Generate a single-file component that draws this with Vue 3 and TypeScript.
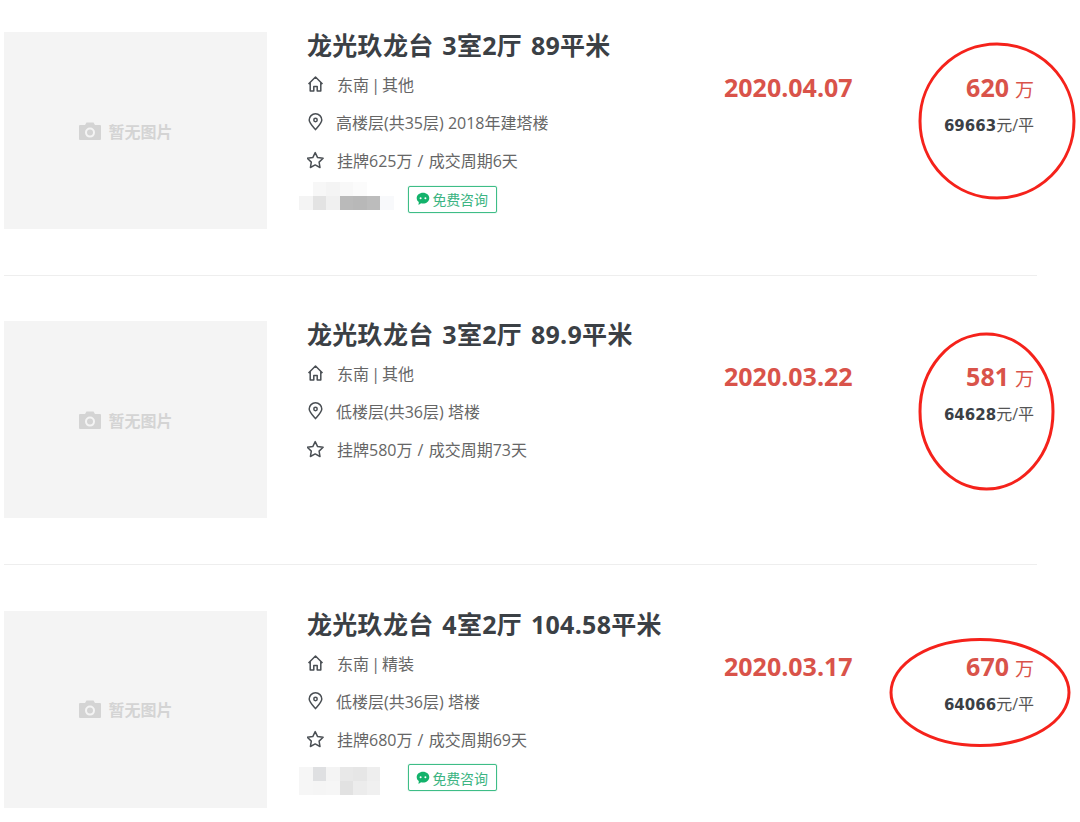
<template>
  <div class="page">
    <div v-for="item in deals" :key="item.date" class="deal">
      <div class="thumb">
        <svg class="thumb__cam" viewBox="0 0 22 18" aria-hidden="true">
          <path fill-rule="evenodd" d="M1 3h5l1.5-2.5h7L16 3h5a1 1 0 0 1 1 1v13a1 1 0 0 1-1 1H1a1 1 0 0 1-1-1V4a1 1 0 0 1 1-1zm10 2.6a5 5 0 1 0 0 10 5 5 0 0 0 0-10zm0 2a3 3 0 1 1 0 6 3 3 0 0 1 0-6z" />
        </svg>
        <span>暂无图片</span>
      </div>

      <div class="info">
        <h3 class="info__title">{{ item.title }}</h3>
        <div class="info__line">
          <svg class="info__icon" viewBox="0 0 18 18" aria-hidden="true">
            <path d="M1.500 9 8.500 2l7 7M3.200 7.600V16h3.600v-4.600h3.400V16h3.600V7.600" />
          </svg>
          <span class="info__text info__text--pipe">{{ item.facing }}</span>
        </div>
        <div class="info__line">
          <svg class="info__icon" viewBox="0 0 18 18" aria-hidden="true">
            <path d="M8.500 16.600C5.100 12.800 2.200 10 2.200 7.100a6.300 6.300 0 0 1 12.600 0c0 2.900-2.900 5.700-6.300 9.500z" />
            <circle cx="8.500" cy="7" r="1.700" />
          </svg>
          <span class="info__text info__text--tight">{{ item.floor }}</span>
        </div>
        <div class="info__line">
          <svg class="info__icon" viewBox="0 0 18 18" aria-hidden="true">
            <path d="m8.200 1.600 2.400 5 5.500.7-4 3.800.9 5.400-4.800-2.600-4.800 2.600.9-5.400-4-3.800 5.500-.7z" />
          </svg>
          <span class="info__text info__text--spaced">{{ item.listing }}</span>
        </div>
        <div v-if="item.mosaic" class="info__agent">
          <div class="mosaic" :style="{ marginTop: `${item.mosaicOffset}px` }">
            <i
              v-for="(shade, i) in item.mosaic"
              :key="i"
              :style="{ background: shade }"
            ></i>
          </div>
          <span class="consult">
            <svg class="consult__icon" viewBox="0 0 14 14" aria-hidden="true">
              <path d="M7 .8c3.500 0 6.300 2.400 6.300 5.400S10.500 11.600 7 11.600c-.7 0-1.300-.1-1.900-.3L2.500 13l.3-2.900C1.500 9.100.7 7.700.7 6.200.7 3.200 3.500.8 7 .8z" />
              <circle class="consult__dot" cx="4.600" cy="6.200" r="1" />
              <circle class="consult__dot" cx="9.400" cy="6.200" r="1" />
            </svg>
            免费咨询
          </span>
        </div>
      </div>

      <div class="date">{{ item.date }}</div>

      <div class="price">
        <div class="price__total"><b>{{ item.total }}</b><span>万</span></div>
        <div class="price__unit"><b>{{ item.unit }}</b>元/平</div>
      </div>
    </div>

    <svg class="marks" viewBox="0 0 1080 822" aria-hidden="true">
      <ellipse cx="997" cy="121" rx="77" ry="77" />
      <ellipse cx="986.500" cy="411.500" rx="66.500" ry="77.500" />
      <ellipse cx="980" cy="692.500" rx="89" ry="53" />
    </svg>
  </div>
</template>

<script setup lang="ts">
interface Deal {
  title: string;
  facing: string;
  floor: string;
  listing: string;
  date: string;
  total: number;
  unit: number;
  mosaic?: string[];
  mosaicOffset?: number;
}

const deals: Deal[] = [
  {
    title: '龙光玖龙台 3室2厅 89平米',
    facing: '东南 | 其他',
    floor: '高楼层(共35层) 2018年建塔楼',
    listing: '挂牌625万 / 成交周期6天',
    date: '2020.04.07',
    total: 620,
    unit: 69663,
    mosaic: [
      '#fff', '#f7f7f7', '#f4f4f4', '#f8f8f8', '#fbfbfb', '#fff', '#fff',
      '#f4f4f4', '#e3e3e3', '#f0f0f0', '#bababa', '#b8b8b8', '#bcbcbc', '#f8f9fb',
    ],
    mosaicOffset: -6,
  },
  {
    title: '龙光玖龙台 3室2厅 89.9平米',
    facing: '东南 | 其他',
    floor: '低楼层(共36层) 塔楼',
    listing: '挂牌580万 / 成交周期73天',
    date: '2020.03.22',
    total: 581,
    unit: 64628,
  },
  {
    title: '龙光玖龙台 4室2厅 104.58平米',
    facing: '东南 | 精装',
    floor: '低楼层(共36层) 塔楼',
    listing: '挂牌680万 / 成交周期69天',
    date: '2020.03.17',
    total: 670,
    unit: 64066,
    mosaic: [
      '#f6f6f6', '#dfe0e2', '#f4f4f4', '#e8e8e8', '#e6e6e6', '#eeeeee', '#fff',
      '#f6f6f6', '#f5f5f5', '#f6f6f6', '#e2e2e2', '#ececec', '#f0f0f0', '#fff',
    ],
    mosaicOffset: 6,
  },
];
</script>

<style scoped>
.page {
  position: relative;
  box-sizing: border-box;
  width: 1080px;
  height: 822px;
  overflow: hidden;
  padding: 32px 43px 0 4px;
  background: #fff;
  font-family: "Open Sans", "Noto Sans CJK SC", sans-serif;
  color: #666;
}

.deal {
  display: grid;
  grid-template-columns: 263px 457px 190px 1fr;
  height: 197px;
  padding-bottom: 46px;
  margin-bottom: 45.4px;
  border-bottom: 1px solid #eee;
}

.deal:last-of-type {
  border-bottom: 0;
}

.thumb {
  display: flex;
  align-items: center;
  justify-content: center;
  gap: 7px;
  height: 197px;
  padding-right: 19px;
  box-sizing: border-box;
  background: #f4f4f4;
  color: #d4d4d4;
  font-size: 16px;
  font-weight: 700;
}

.thumb__cam {
  width: 22px;
  height: 18px;
  fill: #d4d4d4;
}

.info {
  padding-left: 40px;
}

.info__title {
  margin: -1px 0 6px;
  font-size: 25px;
  line-height: 28px;
  font-weight: 700;
  letter-spacing: 0.3px;
  word-spacing: 2px;
  color: #3b4045;
  white-space: nowrap;
}

.info__line {
  display: flex;
  align-items: center;
  height: 38px;
  font-size: 16px;
}

.info__icon {
  flex: none;
  width: 18px;
  height: 18px;
  margin-right: 12px;
  fill: none;
  stroke: #4a4f54;
  stroke-width: 1.500;
  stroke-linejoin: round;
}

.info__text--tight {
  margin-left: -1px;
}

.info__text--pipe {
  word-spacing: -2px;
}

.info__text--spaced {
  word-spacing: 1px;
}

.info__agent {
  display: flex;
  align-items: center;
  height: 40px;
  margin-left: -8px;
}

.mosaic {
  display: grid;
  grid-template-columns: repeat(7, 13.500px);
  grid-auto-rows: 14px;
  margin-right: 14px;
  filter: blur(0.6px);
}

.consult {
  display: inline-flex;
  align-items: center;
  gap: 3px;
  box-sizing: border-box;
  width: 89px;
  height: 27px;
  padding-left: 7px;
  border: 1px solid #3ebd87;
  border-radius: 2px;
  box-shadow: 0 0 1px #3ebd87;
  font-size: 14px;
  letter-spacing: -0.2px;
  color: #3cb482;
  white-space: nowrap;
}

.consult__icon {
  flex: none;
  width: 14px;
  height: 14px;
  fill: #13b26b;
}

.consult__dot {
  fill: #fff;
}

.date {
  padding-top: 39px;
  font-size: 25px;
  line-height: 32px;
  font-weight: 700;
  color: #d9534a;
  white-space: nowrap;
}

.price {
  padding: 39px 3px 0 0;
  text-align: right;
  white-space: nowrap;
}

.price__total {
  font-size: 19px;
  line-height: 32px;
  color: #d9534a;
}

.price__total b {
  margin-right: 6px;
  font-size: 25px;
}

.price__unit {
  margin-top: 7px;
  font-size: 16px;
  line-height: 24px;
  color: #555;
}

.price__unit b {
  font-family: "DejaVu Sans", sans-serif;
  font-size: 15px;
  color: #3b4045;
}

.marks {
  position: absolute;
  inset: 0;
  width: 1080px;
  height: 822px;
  fill: none;
  stroke: #f5221b;
  stroke-width: 3;
  pointer-events: none;
}
</style>
